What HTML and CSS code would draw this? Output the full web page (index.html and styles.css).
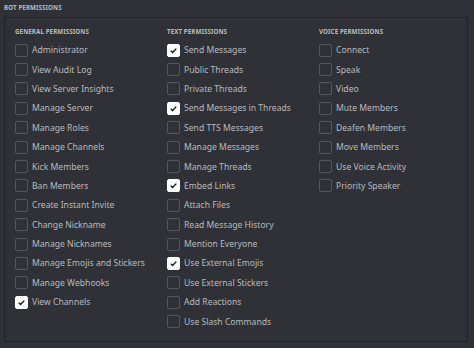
FILE: index.html
```html
<!DOCTYPE html>
<html>
<head>
<meta charset="utf-8">
<link rel="stylesheet" href="styles.css">
</head>
<body>
<div class="title">BOT PERMISSIONS</div>
<div class="panel">
  <div class="col">
    <div class="heading">GENERAL PERMISSIONS</div>
    <div class="row"><span class="box"></span><span class="label">Administrator</span></div>
    <div class="row"><span class="box"></span><span class="label">View Audit Log</span></div>
    <div class="row"><span class="box"></span><span class="label">View Server Insights</span></div>
    <div class="row"><span class="box"></span><span class="label">Manage Server</span></div>
    <div class="row"><span class="box"></span><span class="label">Manage Roles</span></div>
    <div class="row"><span class="box"></span><span class="label">Manage Channels</span></div>
    <div class="row"><span class="box"></span><span class="label">Kick Members</span></div>
    <div class="row"><span class="box"></span><span class="label">Ban Members</span></div>
    <div class="row"><span class="box"></span><span class="label">Create Instant Invite</span></div>
    <div class="row"><span class="box"></span><span class="label">Change Nickname</span></div>
    <div class="row"><span class="box"></span><span class="label">Manage Nicknames</span></div>
    <div class="row"><span class="box"></span><span class="label">Manage Emojis and Stickers</span></div>
    <div class="row"><span class="box"></span><span class="label">Manage Webhooks</span></div>
    <div class="row"><span class="box checked"><svg viewBox="0 0 13 13" width="13" height="13"><path d="M3.3 6.8 L5.4 8.9 L9.8 4.3" fill="none" stroke="#111" stroke-width="1.6"/></svg></span><span class="label">View Channels</span></div>
  </div>
  <div class="col">
    <div class="heading">TEXT PERMISSIONS</div>
    <div class="row"><span class="box checked"><svg viewBox="0 0 13 13" width="13" height="13"><path d="M3.3 6.8 L5.4 8.9 L9.8 4.3" fill="none" stroke="#111" stroke-width="1.6"/></svg></span><span class="label">Send Messages</span></div>
    <div class="row"><span class="box"></span><span class="label">Public Threads</span></div>
    <div class="row"><span class="box"></span><span class="label">Private Threads</span></div>
    <div class="row"><span class="box checked"><svg viewBox="0 0 13 13" width="13" height="13"><path d="M3.3 6.8 L5.4 8.9 L9.8 4.3" fill="none" stroke="#111" stroke-width="1.6"/></svg></span><span class="label">Send Messages in Threads</span></div>
    <div class="row"><span class="box"></span><span class="label">Send TTS Messages</span></div>
    <div class="row"><span class="box"></span><span class="label">Manage Messages</span></div>
    <div class="row"><span class="box"></span><span class="label">Manage Threads</span></div>
    <div class="row"><span class="box checked"><svg viewBox="0 0 13 13" width="13" height="13"><path d="M3.3 6.8 L5.4 8.9 L9.8 4.3" fill="none" stroke="#111" stroke-width="1.6"/></svg></span><span class="label">Embed Links</span></div>
    <div class="row"><span class="box"></span><span class="label">Attach Files</span></div>
    <div class="row"><span class="box"></span><span class="label">Read Message History</span></div>
    <div class="row"><span class="box"></span><span class="label">Mention Everyone</span></div>
    <div class="row"><span class="box checked"><svg viewBox="0 0 13 13" width="13" height="13"><path d="M3.3 6.8 L5.4 8.9 L9.8 4.3" fill="none" stroke="#111" stroke-width="1.6"/></svg></span><span class="label">Use External Emojis</span></div>
    <div class="row"><span class="box"></span><span class="label">Use External Stickers</span></div>
    <div class="row"><span class="box"></span><span class="label">Add Reactions</span></div>
    <div class="row"><span class="box"></span><span class="label">Use Slash Commands</span></div>
  </div>
  <div class="col">
    <div class="heading">VOICE PERMISSIONS</div>
    <div class="row"><span class="box"></span><span class="label">Connect</span></div>
    <div class="row"><span class="box"></span><span class="label">Speak</span></div>
    <div class="row"><span class="box"></span><span class="label">Video</span></div>
    <div class="row"><span class="box"></span><span class="label">Mute Members</span></div>
    <div class="row"><span class="box"></span><span class="label">Deafen Members</span></div>
    <div class="row"><span class="box"></span><span class="label">Move Members</span></div>
    <div class="row"><span class="box"></span><span class="label">Use Voice Activity</span></div>
    <div class="row"><span class="box"></span><span class="label">Priority Speaker</span></div>
  </div>
</div>
</body>
</html>
```

FILE: styles.css
```css
html, body {
  margin: 0;
  padding: 0;
  background: #2f3136;
  font-family: "Noto Sans", "Open Sans", sans-serif;
  width: 474px;
  height: 348px;
  overflow: hidden;
}
.title {
  height: 17px;
  box-sizing: border-box;
  padding: 3px 0 0 4px;
  font-size: 6.2px;
  font-weight: 700;
  line-height: 10px;
  color: #b9bbbe;
  letter-spacing: 0.1px;
}
.panel {
  margin: 0 6px 0 4px;
  height: 325px;
  box-sizing: border-box;
  border: 1px solid #202225;
  background: #2f3136;
  padding: 8px 0 0 10px;
  display: grid;
  grid-template-columns: 152px 152px 152px;
  align-items: start;
}
.col {
  display: flex;
  flex-direction: column;
}
.heading {
  font-size: 6.2px;
  font-weight: 700;
  line-height: 12px;
  color: #b9bbbe;
  margin-bottom: 2.5px;
  letter-spacing: 0.1px;
}
.row {
  height: 19.4px;
  display: flex;
  align-items: center;
}
.box {
  width: 13px;
  height: 13px;
  box-sizing: border-box;
  border: 1px solid #54575e;
  border-radius: 2px;
  flex: none;
  display: flex;
  align-items: center;
  justify-content: center;
}
.box.checked {
  background: #ffffff;
  border-color: #ffffff;
}
.box svg {
  display: block;
}
.label {
  margin-left: 4px;
  font-size: 8.6px;
  color: #b9bbbe;
  white-space: nowrap;
}
```
